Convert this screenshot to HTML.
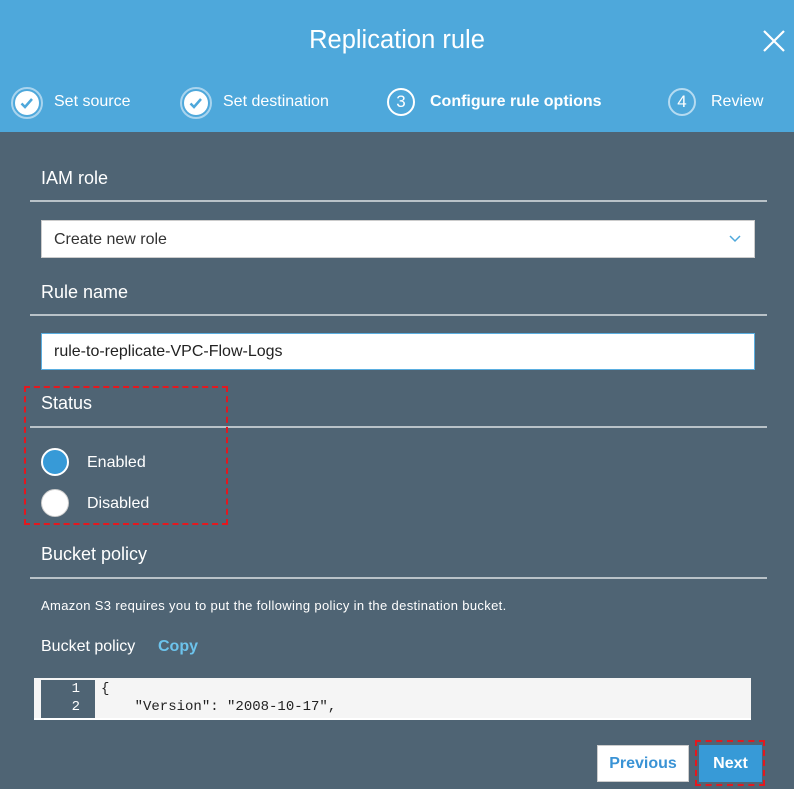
<!DOCTYPE html>
<html><head><style>
*{margin:0;padding:0;box-sizing:border-box}
body{width:794px;height:789px;background:#4f6474;font-family:"Liberation Sans",sans-serif;color:#fff;position:relative;overflow:hidden}
.a{position:absolute}
.hdr{left:0;top:0;width:794px;height:132px;background:#4ea8db}
.line{left:30px;width:737px;height:2px;background:#b9c2c8}
.lbl{font-size:18px;left:41px}
.step{font-size:16px;top:93px}
.circ{border-radius:50%;border:2px solid #fff;width:28px;height:28px;text-align:center;font-size:17px;line-height:24px}
</style></head><body>
<div class="a hdr"></div>
<div class="a" style="left:0;width:794px;top:26px;text-align:center;font-size:25.5px">Replication rule</div>
<svg class="a" style="left:762px;top:29px" width="24" height="24"><path d="M2 2L22 22M22 2L2 22" stroke="#fff" stroke-width="2.2"/></svg>
<svg class="a" style="left:11px;top:87px" width="32" height="32"><circle cx="16" cy="16" r="15" fill="none" stroke="#a9d4ee" stroke-width="2"/><circle cx="16" cy="16" r="12" fill="#fff"/><path d="M10.5 16.5l3.5 3.5 7-8" stroke="#4ea8db" stroke-width="2.5" fill="none"/></svg>
<div class="a step" style="left:54px">Set source</div>
<svg class="a" style="left:180px;top:87px" width="32" height="32"><circle cx="16" cy="16" r="15" fill="none" stroke="#a9d4ee" stroke-width="2"/><circle cx="16" cy="16" r="12" fill="#fff"/><path d="M10.5 16.5l3.5 3.5 7-8" stroke="#4ea8db" stroke-width="2.5" fill="none"/></svg>
<div class="a step" style="left:223px">Set destination</div>
<div class="a circ" style="left:387px;top:88px">3</div>
<div class="a step" style="left:430px;font-weight:bold">Configure rule options</div>
<div class="a circ" style="left:668px;top:88px;border-color:#b5dbf1">4</div>
<div class="a step" style="left:711px">Review</div>

<div class="a lbl" style="top:168px">IAM role</div>
<div class="a line" style="top:200px"></div>
<div class="a" style="left:41px;top:220px;width:714px;height:38px;background:#fff;border:1px solid #ccc;color:#333;font-size:16px;padding:10px 12px">Create new role</div>
<svg class="a" style="left:729px;top:235px" width="12" height="8"><path d="M1 1l5 5 5-5" stroke="#4ea8db" stroke-width="1.5" fill="none"/></svg>
<div class="a lbl" style="top:282px">Rule name</div>
<div class="a line" style="top:314px"></div>
<div class="a" style="left:41px;top:333px;width:714px;height:37px;background:#fff;border:1px solid #5aaee0;color:#222;font-size:16px;padding:9px 12px">rule-to-replicate-VPC-Flow-Logs</div>
<div class="a lbl" style="top:393px">Status</div>
<div class="a line" style="top:426px"></div>
<div class="a" style="left:41px;top:448px;width:28px;height:28px;border-radius:50%;background:#379ad7;border:2px solid #fff"></div>
<div class="a" style="left:87px;top:454px;font-size:16px">Enabled</div>
<div class="a" style="left:41px;top:489px;width:28px;height:28px;border-radius:50%;background:#fff;border:1px solid #ccc"></div>
<div class="a" style="left:87px;top:495px;font-size:16px">Disabled</div>
<div class="a" style="left:24px;top:386px;width:204px;height:139px;border:2px dashed #e3181f"></div>
<div class="a lbl" style="top:544px">Bucket policy</div>
<div class="a line" style="top:577px"></div>
<div class="a" style="left:41px;top:598px;font-size:13px;letter-spacing:0.35px">Amazon S3 requires you to put the following policy in the destination bucket.</div>
<div class="a" style="left:41px;top:638px;font-size:16px">Bucket policy</div>
<div class="a" style="left:158px;top:638px;font-size:16px;color:#6cc3ec;font-weight:bold">Copy</div>
<div class="a" style="left:34px;top:678px;width:717px;height:42px;background:#f5f5f5;border-bottom:2px solid #fff"></div>
<div class="a" style="left:41px;top:680px;width:54px;height:38px;background:#4f6474;font-family:'Liberation Mono',monospace;font-size:14px;text-align:right;padding-right:15px;line-height:18px">1<br>2</div>
<div class="a" style="left:101px;top:680px;font-family:'Liberation Mono',monospace;font-size:14px;color:#222;line-height:18px;white-space:pre">{
    "Version": "2008-10-17",</div>
<div class="a" style="left:597px;top:745px;width:92px;height:37px;background:#fff;border:1px solid #ccc;color:#3a93d5;font-weight:bold;font-size:16px;text-align:center;line-height:35px">Previous</div>
<div class="a" style="left:699px;top:745px;width:63px;height:37px;background:#379ad7;font-weight:bold;font-size:16px;text-align:center;line-height:37px">Next</div>
<div class="a" style="left:695px;top:740px;width:70px;height:46px;border:2px dashed #e3181f"></div>
</body></html>
